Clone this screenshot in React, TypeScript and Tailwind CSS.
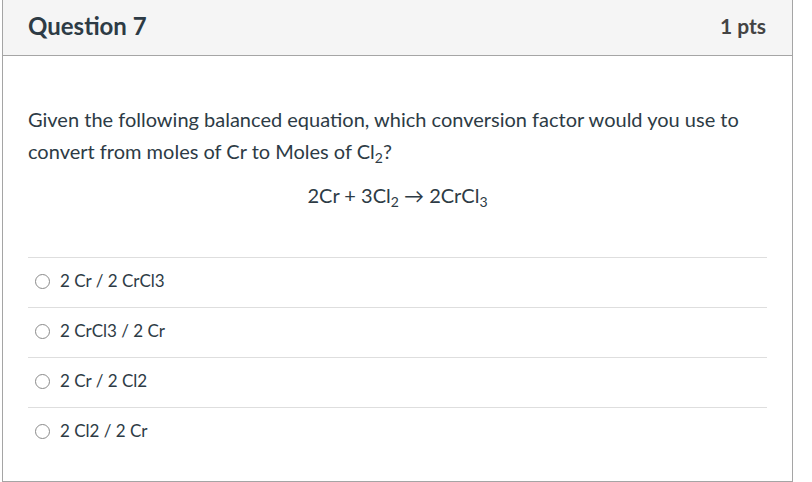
import React from "react";

const answers = ["2 Cr / 2 CrCl3", "2 CrCl3 / 2 Cr", "2 Cr / 2 Cl2", "2 Cl2 / 2 Cr"];

export default function App() {
  return (
    <div className="w-[812px] h-[482px] bg-white" style={{ fontFamily: "Lato, 'Liberation Sans', sans-serif" }}>
      <div className="ml-[2px] w-[791px] h-[482px] border-x border-b border-[#a5a5a5] flex flex-col text-[#2d3b45]">
        <div className="h-[56px] shrink-0 bg-[#f5f5f5] border-b border-[#a5a5a5] flex items-center justify-between pl-[25px] pr-[26px] pb-[4px]">
          <span className="text-[24px] font-bold text-[#2d3b45]">Question 7</span>
          <span className="text-[21px] font-bold text-[#444]">1 pts</span>
        </div>
        <div className="px-[25px] pt-[47px]">
          <p className="text-[20px] leading-[32px] text-[#2d3b45]">
            Given the following balanced equation, which conversion factor would you use to convert from moles of Cr to Moles of Cl<sub className="text-[14px] leading-none">2</sub>?
          </p>
          <p className="text-[20px] leading-[32px] text-center mt-[12px] text-[#2d3b45]">
            2Cr + 3Cl<sub className="text-[14px] leading-none">2</sub> → 2CrCl<sub className="text-[14px] leading-none">3</sub>
          </p>
          <div className="mt-[46px]">
            {answers.map((a) => (
              <div key={a} className="h-[50px] border-t border-[#dedede] flex items-center pl-[7px] pb-[3px]">
                <span className="w-[15px] h-[15px] rounded-full border border-[#8a8a8a] bg-white" />
                <span className="ml-[10px] text-[17px] text-[#2d3b45]">{a}</span>
              </div>
            ))}
          </div>
        </div>
      </div>
    </div>
  );
}
